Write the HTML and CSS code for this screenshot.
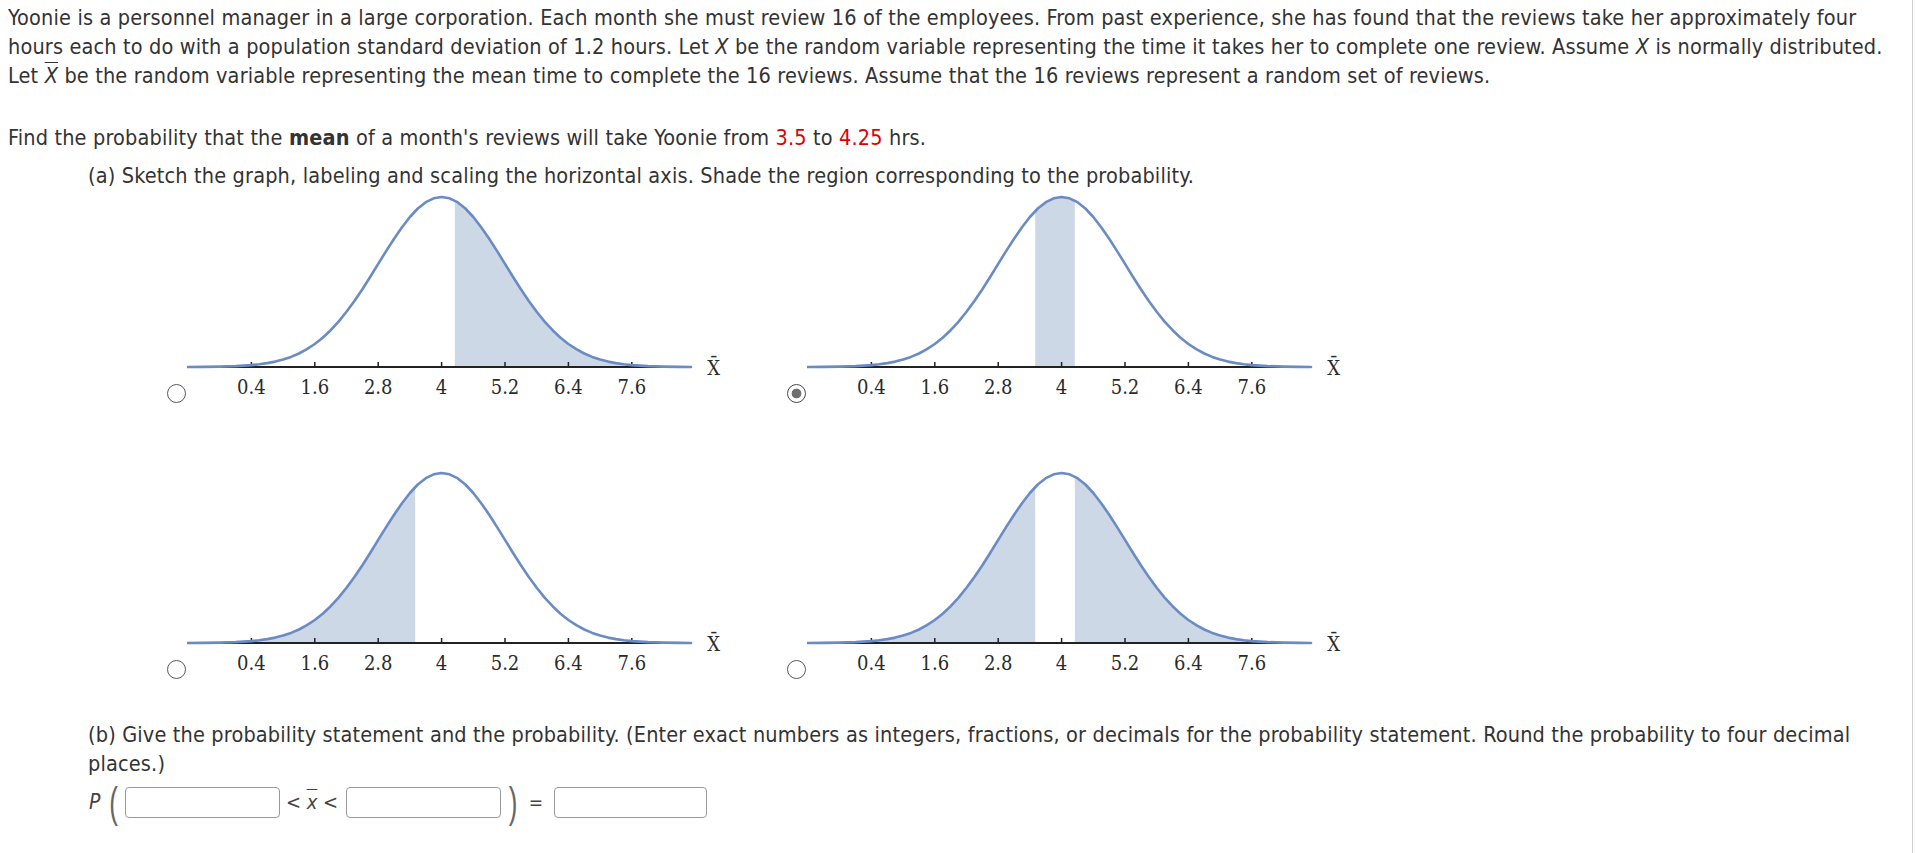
FILE: index.html
```
<!DOCTYPE html>
<html lang="en">
<head>
<meta charset="utf-8">
<title>Sampling distribution question</title>
<link rel="stylesheet" href="styles.css">
</head>
<body>
<div class="question">
  <p class="intro">Yoonie is a personnel manager in a large corporation. Each month she must review 16 of the employees. From past experience, she has found that the reviews take her approximately four hours each to do with a population standard deviation of 1.2 hours. Let <i>X</i> be the random variable representing the time it takes her to complete one review. Assume <i>X</i> is normally distributed. Let <span class="ov"><i>X</i></span> be the random variable representing the mean time to complete the 16 reviews. Assume that the 16 reviews represent a random set of reviews.</p>
  <p class="find">Find the probability that the <b>mean</b> of a month's reviews will take Yoonie from <span class="red">3.5</span> to <span class="red">4.25</span> hrs.</p>
  <p class="part">(a) Sketch the graph, labeling and scaling the horizontal axis. Shade the region corresponding to the probability.</p>

  <div class="options">
    <label class="option">
      <span class="radio"></span>
      <svg class="graph" width="540" height="213" viewBox="2 2 540 213">
        <path class="shade" d="M269.8,179 V12.6 L272.5,14.2 L280.4,20.5 L288.3,29 L296.2,39.2 L304.2,50.7 L312.1,63.1 L320,75.9 L327.9,88.7 L335.9,101.2 L343.8,112.9 L351.7,123.8 L359.6,133.6 L367.6,142.2 L375.5,149.7 L383.4,156 L391.3,161.2 L399.3,165.5 L407.2,168.9 L415.1,171.5 L423,173.6 L431,175.1 L438.9,176.3 L446.8,177.1 L462.7,178.1 L478.5,178.6 L494.4,178.9 L506,179 Z"/>
        <path class="axis" d="M2,179 H506"/>
        <path class="tick" d="M66.4,174 V179 M129.8,174 V179 M193.2,174 V179 M256.6,174 V179 M320,174 V179 M383.4,174 V179 M446.8,174 V179"/>
        <path class="curve" d="M2,179 L18.9,178.9 L34.7,178.6 L50.6,178.1 L66.4,177.1 L74.3,176.3 L82.3,175.1 L90.2,173.6 L98.1,171.5 L106,168.9 L114,165.5 L121.9,161.2 L129.8,156 L137.7,149.7 L145.7,142.2 L153.6,133.6 L161.5,123.8 L169.4,112.9 L177.4,101.2 L185.3,88.7 L193.2,75.9 L201.1,63.1 L209.1,50.7 L217,39.2 L224.9,29 L232.8,20.5 L240.8,14.2 L248.7,10.3 L256.6,9 L264.5,10.3 L272.5,14.2 L280.4,20.5 L288.3,29 L296.2,39.2 L304.2,50.7 L312.1,63.1 L320,75.9 L327.9,88.7 L335.9,101.2 L343.8,112.9 L351.7,123.8 L359.6,133.6 L367.6,142.2 L375.5,149.7 L383.4,156 L391.3,161.2 L399.3,165.5 L407.2,168.9 L415.1,171.5 L423,173.6 L431,175.1 L438.9,176.3 L446.8,177.1 L462.7,178.1 L478.5,178.6 L494.4,178.9 L506,179"/>
        <text class="lbl" x="66.4" y="206">0.4</text>
        <text class="lbl" x="129.8" y="206">1.6</text>
        <text class="lbl" x="193.2" y="206">2.8</text>
        <text class="lbl" x="256.6" y="206">4</text>
        <text class="lbl" x="320" y="206">5.2</text>
        <text class="lbl" x="383.4" y="206">6.4</text>
        <text class="lbl" x="446.8" y="206">7.6</text>
        <text class="lbl" x="528.7" y="187">X&#772;</text>
      </svg>
    </label>

    <label class="option">
      <span class="radio checked"></span>
      <svg class="graph" width="540" height="213" viewBox="2 2 540 213">
        <path class="shade" d="M230.2,179 V23.1 L232.8,20.5 L240.8,14.2 L248.7,10.3 L256.6,9 L264.5,10.3 L269.8,12.6 V179 Z"/>
        <path class="axis" d="M2,179 H506"/>
        <path class="tick" d="M66.4,174 V179 M129.8,174 V179 M193.2,174 V179 M256.6,174 V179 M320,174 V179 M383.4,174 V179 M446.8,174 V179"/>
        <path class="curve" d="M2,179 L18.9,178.9 L34.7,178.6 L50.6,178.1 L66.4,177.1 L74.3,176.3 L82.3,175.1 L90.2,173.6 L98.1,171.5 L106,168.9 L114,165.5 L121.9,161.2 L129.8,156 L137.7,149.7 L145.7,142.2 L153.6,133.6 L161.5,123.8 L169.4,112.9 L177.4,101.2 L185.3,88.7 L193.2,75.9 L201.1,63.1 L209.1,50.7 L217,39.2 L224.9,29 L232.8,20.5 L240.8,14.2 L248.7,10.3 L256.6,9 L264.5,10.3 L272.5,14.2 L280.4,20.5 L288.3,29 L296.2,39.2 L304.2,50.7 L312.1,63.1 L320,75.9 L327.9,88.7 L335.9,101.2 L343.8,112.9 L351.7,123.8 L359.6,133.6 L367.6,142.2 L375.5,149.7 L383.4,156 L391.3,161.2 L399.3,165.5 L407.2,168.9 L415.1,171.5 L423,173.6 L431,175.1 L438.9,176.3 L446.8,177.1 L462.7,178.1 L478.5,178.6 L494.4,178.9 L506,179"/>
        <text class="lbl" x="66.4" y="206">0.4</text>
        <text class="lbl" x="129.8" y="206">1.6</text>
        <text class="lbl" x="193.2" y="206">2.8</text>
        <text class="lbl" x="256.6" y="206">4</text>
        <text class="lbl" x="320" y="206">5.2</text>
        <text class="lbl" x="383.4" y="206">6.4</text>
        <text class="lbl" x="446.8" y="206">7.6</text>
        <text class="lbl" x="528.7" y="187">X&#772;</text>
      </svg>
    </label>

    <label class="option">
      <span class="radio"></span>
      <svg class="graph" width="540" height="213" viewBox="2 2 540 213">
        <path class="shade" d="M2,179 L18.9,178.9 L34.7,178.6 L50.6,178.1 L66.4,177.1 L74.3,176.3 L82.3,175.1 L90.2,173.6 L98.1,171.5 L106,168.9 L114,165.5 L121.9,161.2 L129.8,156 L137.7,149.7 L145.7,142.2 L153.6,133.6 L161.5,123.8 L169.4,112.9 L177.4,101.2 L185.3,88.7 L193.2,75.9 L201.1,63.1 L209.1,50.7 L217,39.2 L224.9,29 L230.2,23.1 V179 Z"/>
        <path class="axis" d="M2,179 H506"/>
        <path class="tick" d="M66.4,174 V179 M129.8,174 V179 M193.2,174 V179 M256.6,174 V179 M320,174 V179 M383.4,174 V179 M446.8,174 V179"/>
        <path class="curve" d="M2,179 L18.9,178.9 L34.7,178.6 L50.6,178.1 L66.4,177.1 L74.3,176.3 L82.3,175.1 L90.2,173.6 L98.1,171.5 L106,168.9 L114,165.5 L121.9,161.2 L129.8,156 L137.7,149.7 L145.7,142.2 L153.6,133.6 L161.5,123.8 L169.4,112.9 L177.4,101.2 L185.3,88.7 L193.2,75.9 L201.1,63.1 L209.1,50.7 L217,39.2 L224.9,29 L232.8,20.5 L240.8,14.2 L248.7,10.3 L256.6,9 L264.5,10.3 L272.5,14.2 L280.4,20.5 L288.3,29 L296.2,39.2 L304.2,50.7 L312.1,63.1 L320,75.9 L327.9,88.7 L335.9,101.2 L343.8,112.9 L351.7,123.8 L359.6,133.6 L367.6,142.2 L375.5,149.7 L383.4,156 L391.3,161.2 L399.3,165.5 L407.2,168.9 L415.1,171.5 L423,173.6 L431,175.1 L438.9,176.3 L446.8,177.1 L462.7,178.1 L478.5,178.6 L494.4,178.9 L506,179"/>
        <text class="lbl" x="66.4" y="206">0.4</text>
        <text class="lbl" x="129.8" y="206">1.6</text>
        <text class="lbl" x="193.2" y="206">2.8</text>
        <text class="lbl" x="256.6" y="206">4</text>
        <text class="lbl" x="320" y="206">5.2</text>
        <text class="lbl" x="383.4" y="206">6.4</text>
        <text class="lbl" x="446.8" y="206">7.6</text>
        <text class="lbl" x="528.7" y="187">X&#772;</text>
      </svg>
    </label>

    <label class="option">
      <span class="radio"></span>
      <svg class="graph" width="540" height="213" viewBox="2 2 540 213">
        <path class="shade" d="M2,179 L18.9,178.9 L34.7,178.6 L50.6,178.1 L66.4,177.1 L74.3,176.3 L82.3,175.1 L90.2,173.6 L98.1,171.5 L106,168.9 L114,165.5 L121.9,161.2 L129.8,156 L137.7,149.7 L145.7,142.2 L153.6,133.6 L161.5,123.8 L169.4,112.9 L177.4,101.2 L185.3,88.7 L193.2,75.9 L201.1,63.1 L209.1,50.7 L217,39.2 L224.9,29 L230.2,23.1 V179 Z"/>
        <path class="shade" d="M269.8,179 V12.6 L272.5,14.2 L280.4,20.5 L288.3,29 L296.2,39.2 L304.2,50.7 L312.1,63.1 L320,75.9 L327.9,88.7 L335.9,101.2 L343.8,112.9 L351.7,123.8 L359.6,133.6 L367.6,142.2 L375.5,149.7 L383.4,156 L391.3,161.2 L399.3,165.5 L407.2,168.9 L415.1,171.5 L423,173.6 L431,175.1 L438.9,176.3 L446.8,177.1 L462.7,178.1 L478.5,178.6 L494.4,178.9 L506,179 Z"/>
        <path class="axis" d="M2,179 H506"/>
        <path class="tick" d="M66.4,174 V179 M129.8,174 V179 M193.2,174 V179 M256.6,174 V179 M320,174 V179 M383.4,174 V179 M446.8,174 V179"/>
        <path class="curve" d="M2,179 L18.9,178.9 L34.7,178.6 L50.6,178.1 L66.4,177.1 L74.3,176.3 L82.3,175.1 L90.2,173.6 L98.1,171.5 L106,168.9 L114,165.5 L121.9,161.2 L129.8,156 L137.7,149.7 L145.7,142.2 L153.6,133.6 L161.5,123.8 L169.4,112.9 L177.4,101.2 L185.3,88.7 L193.2,75.9 L201.1,63.1 L209.1,50.7 L217,39.2 L224.9,29 L232.8,20.5 L240.8,14.2 L248.7,10.3 L256.6,9 L264.5,10.3 L272.5,14.2 L280.4,20.5 L288.3,29 L296.2,39.2 L304.2,50.7 L312.1,63.1 L320,75.9 L327.9,88.7 L335.9,101.2 L343.8,112.9 L351.7,123.8 L359.6,133.6 L367.6,142.2 L375.5,149.7 L383.4,156 L391.3,161.2 L399.3,165.5 L407.2,168.9 L415.1,171.5 L423,173.6 L431,175.1 L438.9,176.3 L446.8,177.1 L462.7,178.1 L478.5,178.6 L494.4,178.9 L506,179"/>
        <text class="lbl" x="66.4" y="206">0.4</text>
        <text class="lbl" x="129.8" y="206">1.6</text>
        <text class="lbl" x="193.2" y="206">2.8</text>
        <text class="lbl" x="256.6" y="206">4</text>
        <text class="lbl" x="320" y="206">5.2</text>
        <text class="lbl" x="383.4" y="206">6.4</text>
        <text class="lbl" x="446.8" y="206">7.6</text>
        <text class="lbl" x="528.7" y="187">X&#772;</text>
      </svg>
    </label>
  </div>

  <p class="part part-b">(b) Give the probability statement and the probability. (Enter exact numbers as integers, fractions, or decimals for the probability statement. Round the probability to four decimal places.)</p>
  <div class="statement">
    <span class="p-letter">P</span>
    <span class="paren">(</span>
    <input class="box box-1" type="text" aria-label="lower bound">
    <span class="ineq">&lt; <span class="ov"><i>x</i></span> &lt;</span>
    <input class="box box-2" type="text" aria-label="upper bound">
    <span class="paren paren-close">)</span>
    <span class="eq">=</span>
    <input class="box box-3" type="text" aria-label="probability">
  </div>
</div>
</body>
</html>
```

FILE: styles.css
```
html, body {
  margin: 0;
  padding: 0;
  background: #fff;
}

body {
  font-family: "DejaVu Sans Condensed", "DejaVu Sans", Verdana, sans-serif;
  font-stretch: condensed;
  font-size: 21.5px;
  letter-spacing: 0.16px;
  line-height: 29px;
  color: #333;
}

.question {
  box-sizing: border-box;
  width: 1913px;
  min-height: 100vh;
  padding: 3px 7px 0 8px;
  border-right: 1px solid #cfcfcf;
}

p {
  margin: 0;
}

.find {
  margin-top: 33px;
}

.part {
  margin-top: 9px;
  padding-left: 80px;
}

.red {
  color: #e00000;
}

.ov {
  text-decoration: overline;
  text-decoration-thickness: 1px;
}

.options {
  display: grid;
  grid-template-columns: 620px 620px;
  row-gap: 63px;
  margin-left: 159px;
}

.option {
  display: flex;
  align-items: flex-end;
  gap: 1px;
  cursor: pointer;
}

.radio {
  box-sizing: border-box;
  flex: none;
  width: 19px;
  height: 19px;
  border: 1.5px solid #5a5a5a;
  border-radius: 50%;
  background: #fff;
}

.radio.checked {
  background: radial-gradient(circle, #6f6f6f 0 4.6px, #fff 5.2px);
  border-color: #4a4a4a;
}

.graph {
  display: block;
  flex: none;
}

.shade {
  fill: #cdd8e7;
}

.axis {
  fill: none;
  stroke: #222;
  stroke-width: 2;
}

.tick {
  fill: none;
  stroke: #222;
  stroke-width: 1.5;
}

.curve {
  fill: none;
  stroke: #6a8bc4;
  stroke-width: 2.6;
  stroke-linejoin: round;
  stroke-linecap: round;
}

.lbl {
  font-family: "DejaVu Serif", "Liberation Serif", serif;
  font-size: 20px;
  letter-spacing: 0;
  fill: #2b2b2b;
  text-anchor: middle;
}

.part-b {
  margin-top: 41px;
}

.statement {
  display: flex;
  align-items: center;
  height: 41px;
  margin-top: 4px;
  padding-left: 81px;
  letter-spacing: 0;
}

.p-letter {
  flex: none;
  width: 16px;
  font-style: italic;
  font-size: 21px;
  color: #444;
}

.paren {
  flex: none;
  display: inline-block;
  width: 17px;
  text-align: center;
  font-family: "Liberation Sans", Arial, sans-serif;
  font-size: 26px;
  line-height: 26px;
  color: #666;
  transform: scaleY(1.6);
}

.box {
  flex: none;
  box-sizing: border-box;
  width: 155px;
  height: 31px;
  margin: 0;
  padding: 2px 6px;
  border: 1px solid #9a9a9a;
  border-radius: 4px;
  background: #fff;
  font: inherit;
  font-size: 18px;
}

.box-1 {
  margin-left: 3px;
}

.ineq {
  flex: none;
  width: 64px;
  text-align: center;
  font-size: 20px;
  color: #444;
  white-space: nowrap;
}

.box-2 {
  margin-left: 2px;
}

.paren-close {
  width: 20px;
  margin-left: 2px;
}

.eq {
  flex: none;
  width: 22px;
  margin-left: 2px;
  text-align: center;
  font-size: 19px;
  color: #444;
}

.box-3 {
  width: 153px;
  margin-left: 7px;
}
```
